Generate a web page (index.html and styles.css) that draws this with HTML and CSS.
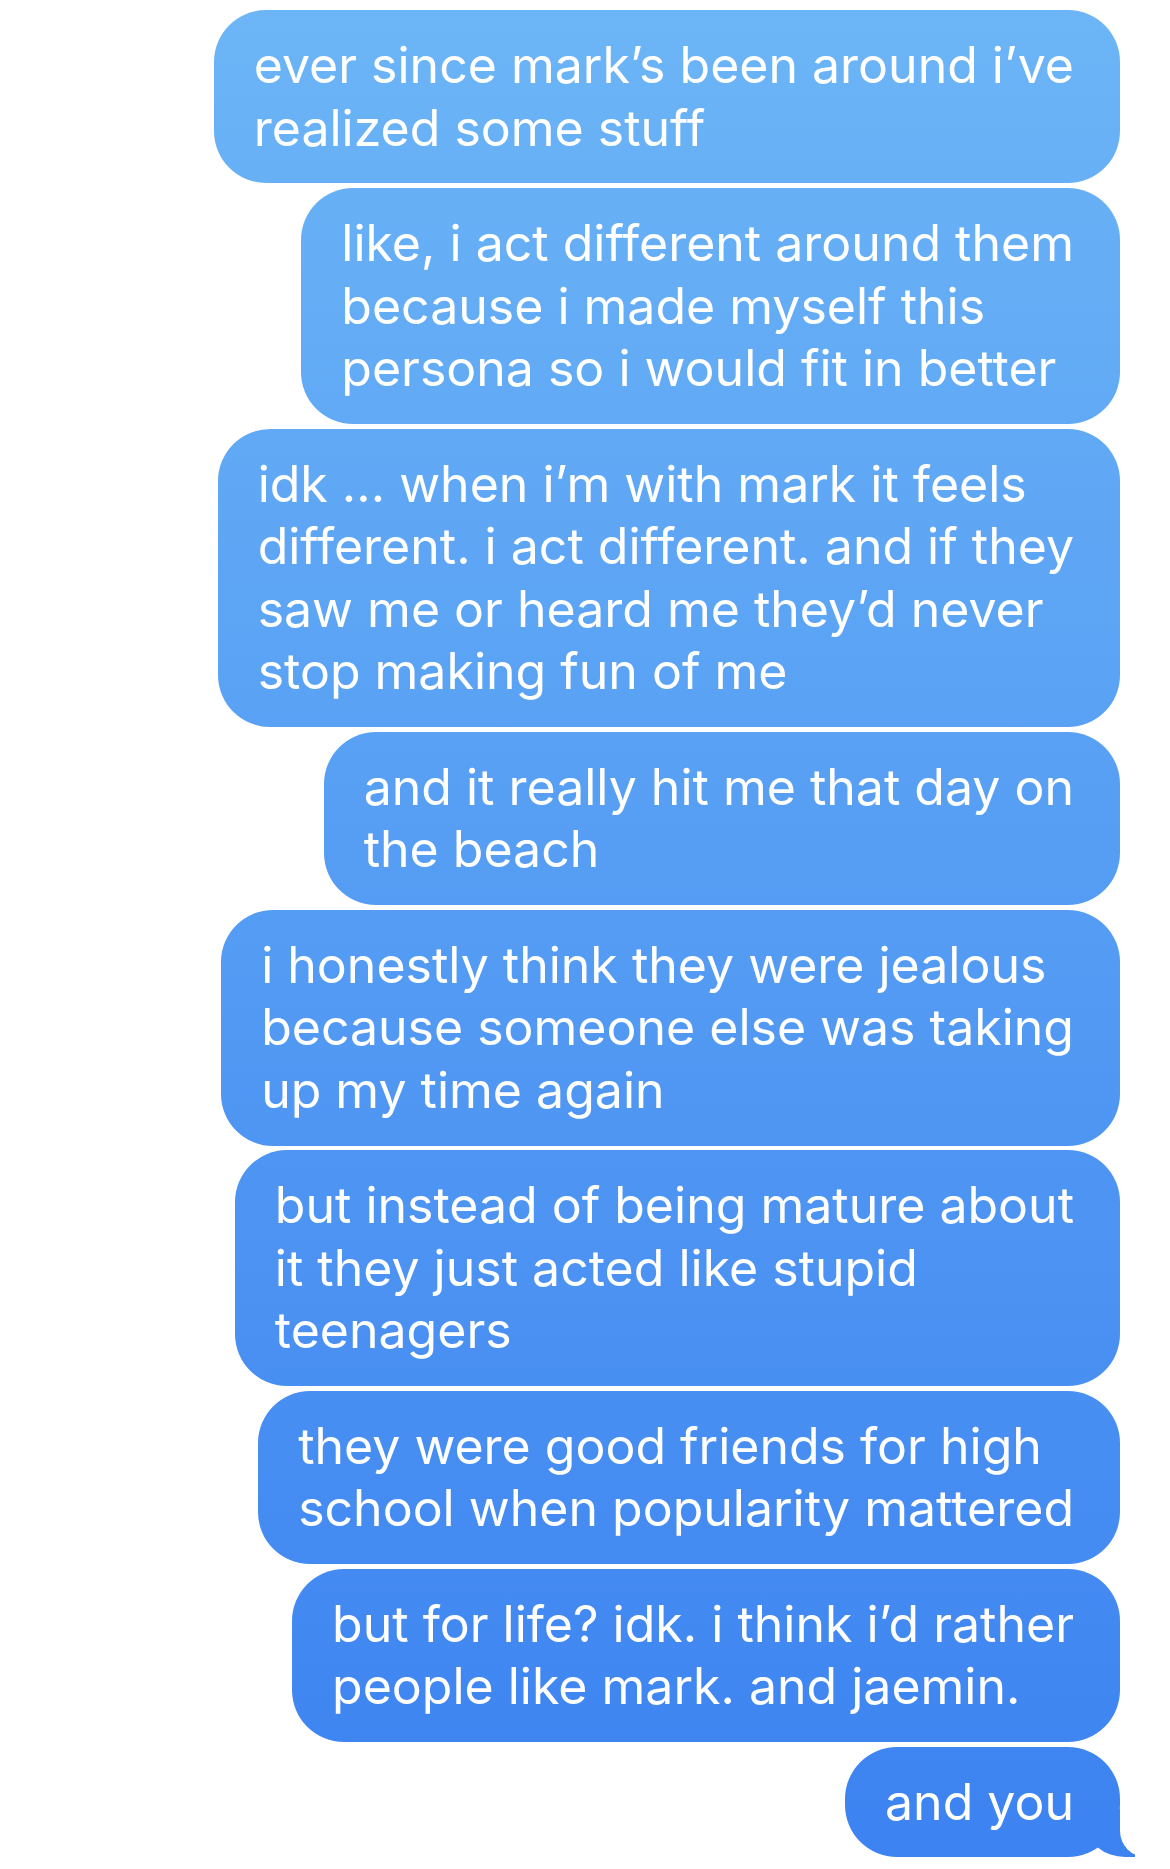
FILE: index.html
```html
<!DOCTYPE html>
<html lang="en">

<head>
    <meta charset="UTF-8">
    <meta name="viewport" content="width=device-width, initial-scale=1.0">
    <title>Messages</title>
    <link rel="stylesheet" href="styles.css">
</head>

<body>
    <div class="thread">
        <p class="bubble">ever since mark’s been around i’ve<br>realized some stuff</p>
        <p class="bubble">like, i act different around them<br>because i made myself this<br>persona so i would fit in better</p>
        <p class="bubble">idk ... when i’m with mark it feels<br>different. i act different. and if they<br>saw me or heard me they’d never<br>stop making fun of me</p>
        <p class="bubble">and it really hit me that day on<br>the beach</p>
        <p class="bubble">i honestly think they were jealous<br>because someone else was taking<br>up my time again</p>
        <p class="bubble">but instead of being mature about<br>it they just acted like stupid<br>teenagers</p>
        <p class="bubble">they were good friends for high<br>school when popularity mattered</p>
        <p class="bubble">but for life? idk. i think i’d rather<br>people like mark. and jaemin.</p>
        <p class="bubble tail">and you</p>
    </div>
</body>

</html>
```

FILE: styles.css
```css
body {
    margin: 0;
    background-color: #fff;
    font-family: Inter, "Liberation Sans", sans-serif;
}

.thread {
    display: flex;
    flex-direction: column;
    align-items: flex-end;
    gap: 4.8px;
    padding: 10px 50px 0 0;
}

.bubble {
    position: relative;
    margin: 0;
    padding: 24px 46px 24px 40px;
    font-size: 50px;
    line-height: 62.6px;
    color: #fff;
    white-space: nowrap;
    border-radius: 52px;
    background: linear-gradient(#6cb5f6, #3c82f1) fixed;
}

/* little tail on the last bubble */
.tail::before {
    content: "";
    position: absolute;
    right: -15px;
    bottom: 0;
    width: 48px;
    height: 48px;
    border-bottom-left-radius: 38px 32px;
    background: linear-gradient(#6cb5f6, #3c82f1) fixed;
}

.tail::after {
    content: "";
    position: absolute;
    right: -60px;
    bottom: 0;
    width: 60px;
    height: 50px;
    border-bottom-left-radius: 26px;
    background-color: #fff;
}
```
